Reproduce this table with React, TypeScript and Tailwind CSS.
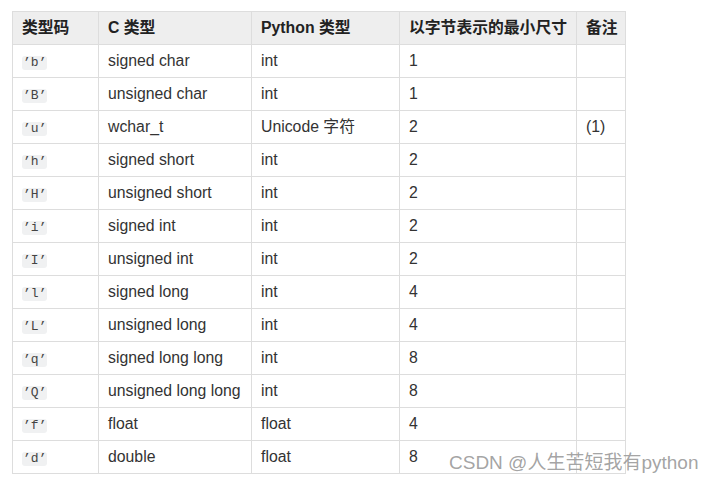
const rows: [string, string, string, string, string][] = [
  ["b", "signed char", "int", "1", ""],
  ["B", "unsigned char", "int", "1", ""],
  ["u", "wchar_t", "Unicode 字符", "2", "(1)"],
  ["h", "signed short", "int", "2", ""],
  ["H", "unsigned short", "int", "2", ""],
  ["i", "signed int", "int", "2", ""],
  ["I", "unsigned int", "int", "2", ""],
  ["l", "signed long", "int", "4", ""],
  ["L", "unsigned long", "int", "4", ""],
  ["q", "signed long long", "int", "8", ""],
  ["Q", "unsigned long long", "int", "8", ""],
  ["f", "float", "float", "4", ""],
  ["d", "double", "float", "8", ""],
]

const headers = ["类型码", "C 类型", "Python 类型", "以字节表示的最小尺寸", "备注"]
const widths = ["w-[86px]", "w-[153px]", "w-[148px]", "w-[177px]", "w-[49px]"]

export default function App() {
  return (
    <div className="relative w-[712px] h-[481px] bg-white pl-[12px] pt-[11px] font-['Liberation_Sans','Noto_Sans_CJK_SC',sans-serif] text-[15.8px] text-[#333]">
      <table className="border-collapse table-fixed w-[614px] whitespace-nowrap">
        <thead>
          <tr className="h-[33px] bg-[#eeeeee]">
            {headers.map((h, i) => (
              <th
                key={h}
                className={`${widths[i]} border border-[#dddddd] px-[9px] text-left font-bold text-[#222]`}
              >
                {h}
              </th>
            ))}
          </tr>
        </thead>
        <tbody>
          {rows.map((r) => (
            <tr key={r[0]} className="h-[33px]">
              <td className="border border-[#dddddd] px-[9px]">
                <code className="inline-block rounded-[3px] bg-[#f0f1f2] px-[1px] text-[13px] leading-[14px] text-[#444] font-['Liberation_Mono','Noto_Sans_CJK_SC',monospace]">
                  ’{r[0]}’
                </code>
              </td>
              <td className="border border-[#dddddd] px-[9px]">{r[1]}</td>
              <td className="border border-[#dddddd] px-[9px]">{r[2]}</td>
              <td className="border border-[#dddddd] px-[9px]">{r[3]}</td>
              <td className="border border-[#dddddd] px-[9px]">{r[4]}</td>
            </tr>
          ))}
        </tbody>
      </table>
      <div className="absolute left-[449px] top-[449px] text-[19px] text-[#999]/90 font-['Liberation_Sans','Noto_Sans_CJK_SC',sans-serif]">
        CSDN @人生苦短我有python
      </div>
    </div>
  )
}
